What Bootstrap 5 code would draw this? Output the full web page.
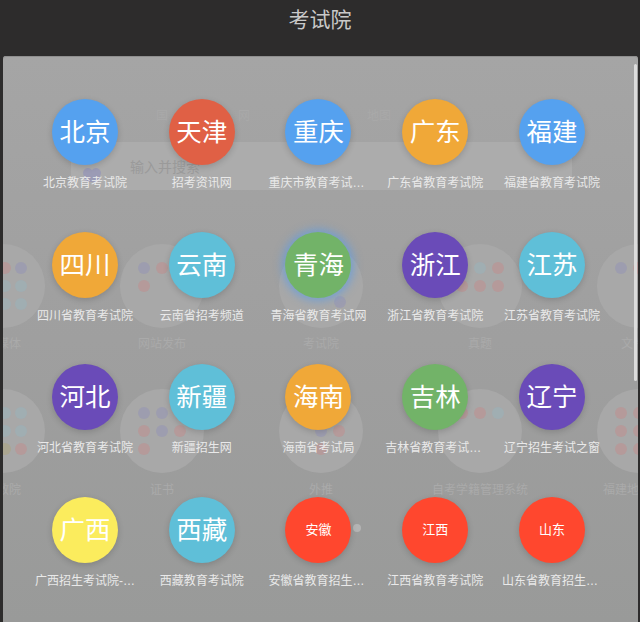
<!DOCTYPE html>
<html lang="zh">
<head>
<meta charset="utf-8">
<title>考试院</title>
<link href="https://cdn.jsdelivr.net/npm/bootstrap@5.3.0/dist/css/bootstrap.min.css" rel="stylesheet">
<style>
html,body{height:100%;overflow:hidden}
body{background:#2d2c2c;font-family:"Liberation Sans","Noto Sans CJK SC",sans-serif}
.top-bar{height:56px;padding-top:6px;color:#c9c9c9;font-size:21px;line-height:27px}
.sheet{height:566px;margin:0 2px 0 3px;background:linear-gradient(#a5a5a5,#9f9f9f 50%,#999a99);border-radius:3px 3px 0 0;box-shadow:inset 0 1px 0 #8f8f8f}
.under{left:0;top:0;width:635px;height:566px}
.under text{font-size:12px;fill:#aaa;text-anchor:middle}
.under .hint{font-size:14px;fill:#9a9a9a;text-anchor:start}
.under .faint{fill:#a9a9a9}
.minis{opacity:.55}
.cells{padding:43px 0 0 23.5px;width:620px}
.cell{width:116.8px;height:132.7px}
.disc{width:66px;height:66px;font-size:25.5px;box-shadow:0 2px 6px rgba(0,0,0,.16)}
.disc-sm{font-size:13px}
.cap{width:100px;margin-top:10px;font-size:12px;line-height:16px;color:#e9e9e9}
.c-blue{background:#55a1ef}.c-tomato{background:#e06045}.c-orange{background:#f0a838}
.c-cyan{background:#5fbfd8}.c-green{background:#72b368}.c-purple{background:#6a4bb8}
.c-yellow{background:#fbec5d}.c-red{background:#ff472e}
.glow{box-shadow:0 0 9px 3px rgba(85,155,235,.6)}
.thumb{right:1px;top:8px;width:3px;height:317px;background:#dcdcdc;border-radius:2px}
</style>
</head>
<body>
<div class="top-bar text-center">考试院</div>
<div class="sheet position-relative overflow-hidden">
<svg class="under position-absolute" viewBox="3 56 635 566" aria-hidden="true">
<rect x="71" y="142" width="501" height="48" fill="#acacac"/>
<g fill="#a8a8a8">
<circle cx="3" cy="286" r="42"/><circle cx="162" cy="286" r="42"/><circle cx="321" cy="286" r="42"/><circle cx="480" cy="286" r="42"/><circle cx="639" cy="286" r="42"/>
<circle cx="3" cy="431" r="42"/><circle cx="162" cy="431" r="42"/><circle cx="321" cy="431" r="42"/><circle cx="480" cy="431" r="42"/><circle cx="639" cy="431" r="42"/>
</g>
<g class="minis">
<g fill="#c08f8f">
<circle cx="5" cy="268" r="6"/><circle cx="162" cy="268" r="6"/><circle cx="144" cy="286" r="6"/><circle cx="498" cy="268" r="6"/><circle cx="462" cy="286" r="6"/><circle cx="480" cy="286" r="6"/><circle cx="498" cy="286" r="6"/><circle cx="639" cy="268" r="6"/>
<circle cx="21" cy="449" r="6"/><circle cx="144" cy="431" r="6"/><circle cx="180" cy="431" r="6"/><circle cx="144" cy="449" r="6"/><circle cx="321" cy="449" r="6"/><circle cx="339" cy="431" r="6"/><circle cx="462" cy="413" r="6"/><circle cx="480" cy="413" r="6"/>
<circle cx="621" cy="413" r="6"/><circle cx="639" cy="413" r="6"/><circle cx="621" cy="431" r="6"/><circle cx="639" cy="431" r="6"/><circle cx="621" cy="449" r="6"/><circle cx="639" cy="449" r="6"/>
</g>
<g fill="#9595b5">
<circle cx="21" cy="268" r="6"/><circle cx="144" cy="268" r="6"/><circle cx="621" cy="268" r="6"/><circle cx="162" cy="431" r="6"/><circle cx="321" cy="431" r="6"/><circle cx="144" cy="413" r="6"/><circle cx="162" cy="413" r="6"/><circle cx="340" cy="302" r="6"/>
</g>
<g fill="#9ab3bb">
<circle cx="5" cy="286" r="6"/><circle cx="21" cy="286" r="6"/><circle cx="5" cy="304" r="6"/><circle cx="21" cy="304" r="6"/><circle cx="480" cy="268" r="6"/><circle cx="498" cy="413" r="6"/><circle cx="5" cy="413" r="6"/><circle cx="21" cy="413" r="6"/><circle cx="5" cy="431" r="6"/><circle cx="21" cy="431" r="6"/>
</g>
<circle cx="5" cy="449" r="6" fill="#aea67f"/>
</g>
<path d="M84 176a5 5 0 0 1 8-6a5 5 0 0 1 8 6q1 6-4 6h-8q-5 0-4-6z" fill="#9b9bb5"/>
<text class="hint" x="130" y="172">输入并搜索</text>
<text class="faint" x="162" y="120">国</text><text class="faint" x="244" y="120">网</text><text class="faint" x="379" y="120">地图</text>
<text x="9" y="348">媒体</text><text x="162" y="348">网站发布</text><text x="321" y="348">考试院</text><text x="480" y="348">真题</text><text x="639" y="348">文件夹</text>
<text x="9" y="494">教院</text><text x="162" y="494">证书</text><text x="321" y="494">外推</text><text x="480" y="494">自考学籍管理系统</text><text x="639" y="494">福建地市考试</text>
<circle cx="357" cy="528" r="4" fill="#b4b4b4"/>
</svg>
<div class="cells position-relative d-flex flex-wrap">
<div class="cell d-flex flex-column align-items-center"><div class="disc c-blue rounded-circle text-white d-flex align-items-center justify-content-center">北京</div><div class="cap text-center text-truncate">北京教育考试院</div></div>
<div class="cell d-flex flex-column align-items-center"><div class="disc c-tomato rounded-circle text-white d-flex align-items-center justify-content-center">天津</div><div class="cap text-center text-truncate">招考资讯网</div></div>
<div class="cell d-flex flex-column align-items-center"><div class="disc c-blue rounded-circle text-white d-flex align-items-center justify-content-center">重庆</div><div class="cap text-center text-truncate">重庆市教育考试院网站</div></div>
<div class="cell d-flex flex-column align-items-center"><div class="disc c-orange rounded-circle text-white d-flex align-items-center justify-content-center">广东</div><div class="cap text-center text-truncate">广东省教育考试院</div></div>
<div class="cell d-flex flex-column align-items-center"><div class="disc c-blue rounded-circle text-white d-flex align-items-center justify-content-center">福建</div><div class="cap text-center text-truncate">福建省教育考试院</div></div>
<div class="cell d-flex flex-column align-items-center"><div class="disc c-orange rounded-circle text-white d-flex align-items-center justify-content-center">四川</div><div class="cap text-center text-truncate">四川省教育考试院</div></div>
<div class="cell d-flex flex-column align-items-center"><div class="disc c-cyan rounded-circle text-white d-flex align-items-center justify-content-center">云南</div><div class="cap text-center text-truncate">云南省招考频道</div></div>
<div class="cell d-flex flex-column align-items-center"><div class="disc c-green glow rounded-circle text-white d-flex align-items-center justify-content-center">青海</div><div class="cap text-center text-truncate">青海省教育考试网</div></div>
<div class="cell d-flex flex-column align-items-center"><div class="disc c-purple rounded-circle text-white d-flex align-items-center justify-content-center">浙江</div><div class="cap text-center text-truncate">浙江省教育考试院</div></div>
<div class="cell d-flex flex-column align-items-center"><div class="disc c-cyan rounded-circle text-white d-flex align-items-center justify-content-center">江苏</div><div class="cap text-center text-truncate">江苏省教育考试院</div></div>
<div class="cell d-flex flex-column align-items-center"><div class="disc c-purple rounded-circle text-white d-flex align-items-center justify-content-center">河北</div><div class="cap text-center text-truncate">河北省教育考试院</div></div>
<div class="cell d-flex flex-column align-items-center"><div class="disc c-cyan rounded-circle text-white d-flex align-items-center justify-content-center">新疆</div><div class="cap text-center text-truncate">新疆招生网</div></div>
<div class="cell d-flex flex-column align-items-center"><div class="disc c-orange rounded-circle text-white d-flex align-items-center justify-content-center">海南</div><div class="cap text-center text-truncate">海南省考试局</div></div>
<div class="cell d-flex flex-column align-items-center"><div class="disc c-green rounded-circle text-white d-flex align-items-center justify-content-center">吉林</div><div class="cap text-center text-truncate">吉林省教育考试院网站</div></div>
<div class="cell d-flex flex-column align-items-center"><div class="disc c-purple rounded-circle text-white d-flex align-items-center justify-content-center">辽宁</div><div class="cap text-center text-truncate">辽宁招生考试之窗</div></div>
<div class="cell d-flex flex-column align-items-center"><div class="disc c-yellow rounded-circle text-white d-flex align-items-center justify-content-center">广西</div><div class="cap text-center text-truncate">广西招生考试院-广西招生</div></div>
<div class="cell d-flex flex-column align-items-center"><div class="disc c-cyan rounded-circle text-white d-flex align-items-center justify-content-center">西藏</div><div class="cap text-center text-truncate">西藏教育考试院</div></div>
<div class="cell d-flex flex-column align-items-center"><div class="disc disc-sm c-red rounded-circle text-white d-flex align-items-center justify-content-center">安徽</div><div class="cap text-center text-truncate">安徽省教育招生考试院</div></div>
<div class="cell d-flex flex-column align-items-center"><div class="disc disc-sm c-red rounded-circle text-white d-flex align-items-center justify-content-center">江西</div><div class="cap text-center text-truncate">江西省教育考试院</div></div>
<div class="cell d-flex flex-column align-items-center"><div class="disc disc-sm c-red rounded-circle text-white d-flex align-items-center justify-content-center">山东</div><div class="cap text-center text-truncate">山东省教育招生考试院</div></div>
</div>
<div class="thumb position-absolute"></div>
</div>
<script src="https://cdn.jsdelivr.net/npm/bootstrap@5.3.0/dist/js/bootstrap.bundle.min.js"></script>
</body>
</html>
